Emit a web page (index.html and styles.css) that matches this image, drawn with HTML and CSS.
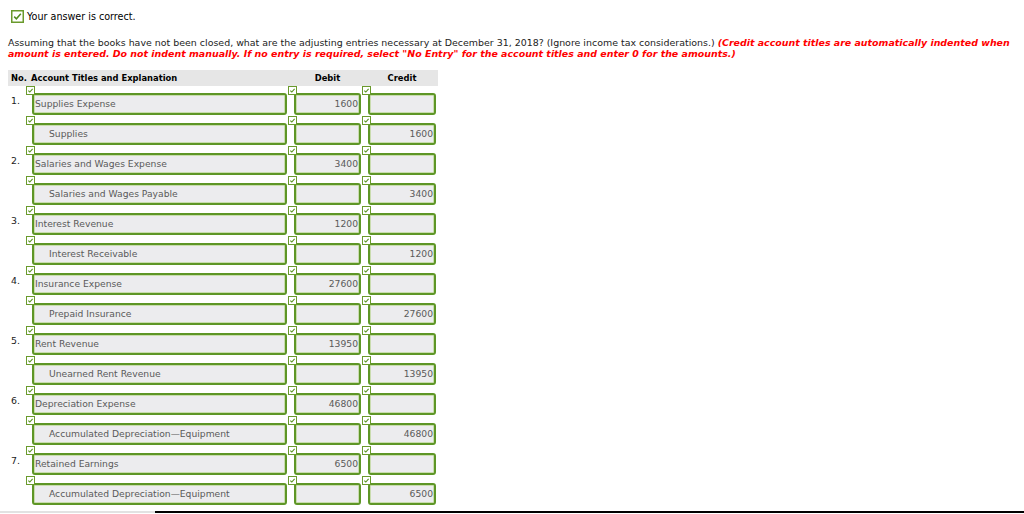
FILE: index.html
```html
<!DOCTYPE html>
<html>
<head>
<meta charset="utf-8">
<link rel="stylesheet" href="styles.css">
</head>
<body>
<div class="page">
  <div class="status">
    <svg class="big-check" width="13" height="13" viewBox="0 0 13 13"><rect x="0.75" y="0.75" width="11.5" height="11.5" fill="#fff" stroke="#6a9a2c" stroke-width="1.5"/><polyline points="3.2,6.6 5.4,8.8 9.8,3.8" fill="none" stroke="#4f8a1c" stroke-width="1.5"/></svg>
    <span>Your answer is correct.</span>
  </div>
  <p class="question">Assuming that the books have not been closed, what are the adjusting entries necessary at December 31, 2018? (Ignore income tax considerations.) <em class="note">(Credit account titles are automatically indented when amount is entered. Do not indent manually. If no entry is required, select "No Entry" for the account titles and enter 0 for the amounts.)</em></p>

  <div class="table">
    <div class="head">
      <div class="h-no">No.</div>
      <div class="h-acc">Account Titles and Explanation</div>
      <div class="h-num">Debit</div>
      <div class="h-num">Credit</div>
    </div>
    <div id="rows"></div>
  </div>
  <div class="bottom-bar"><div class="bar-grey"></div><div class="bar-black"></div></div>
</div>
<script src="app.js"></script>
</body>
</html>
```
FILE: app.js
```js
var data = [
  ["1.", "Supplies Expense", "1600", "Supplies"],
  ["2.", "Salaries and Wages Expense", "3400", "Salaries and Wages Payable"],
  ["3.", "Interest Revenue", "1200", "Interest Receivable"],
  ["4.", "Insurance Expense", "27600", "Prepaid Insurance"],
  ["5.", "Rent Revenue", "13950", "Unearned Rent Revenue"],
  ["6.", "Depreciation Expense", "46800", "Accumulated Depreciation\u2014Equipment"],
  ["7.", "Retained Earnings", "6500", "Accumulated Depreciation\u2014Equipment"]
];
var tick = '<svg class="tick" width="9" height="9" viewBox="0 0 9 9"><rect x="0.5" y="0.5" width="8" height="8" fill="#fff" stroke="#6a9a2c" stroke-width="1"/><polyline points="2.3,4.6 3.8,6 6.6,2.8" fill="none" stroke="#5a9422" stroke-width="1.1"/></svg>';
function cell(cls, text) {
  return '<div class="cell">' + tick + '<div class="box ' + cls + '">' + text + '</div></div>';
}
var html = "";
data.forEach(function (d) {
  html += '<div class="row"><div class="no">' + d[0] + '</div>' +
    cell("acc", d[1]) + cell("num", d[2]) + cell("num", "") + '</div>';
  html += '<div class="row"><div class="no"></div>' +
    cell("acc credit", d[3]) + cell("num", "") + cell("num", d[2]) + '</div>';
});
document.getElementById("rows").innerHTML = html;
```
FILE: styles.css
```css
html, body {
  margin: 0;
  padding: 0;
  background: #fff;
}
body {
  font-family: "DejaVu Sans", Verdana, sans-serif;
  font-size: 10px;
  color: #000;
  width: 1024px;
  height: 514px;
  overflow: hidden;
}
.page {
  width: 1024px;
}
.status {
  display: flex;
  align-items: center;
  gap: 3px;
  padding: 10px 0 0 11px;
  height: 13px;
  font-size: 9.6px;
}
.big-check {
  display: block;
  flex: none;
}
.question {
  margin: 14px 8px 0 8px;
  line-height: 11px;
  font-size: 9.45px;
  color: #222;
}
.note {
  color: #ff0000;
  font-weight: bold;
  font-style: italic;
}
.table {
  margin: 11px 0 0 8px;
  width: 430px;
}
.head {
  display: grid;
  grid-template-columns: 17px 255px 67px 68px;
  column-gap: 7px;
  height: 16px;
  line-height: 16px;
  background: #e6e6e6;
  font-family: "DejaVu Sans Condensed", "DejaVu Sans", sans-serif;
  font-weight: bold;
  font-size: 9.3px;
  padding-right: 2px;
}
.h-no {
  padding-left: 3px;
}
.h-acc {
  margin-left: -1px;
}
.h-num {
  text-align: center;
}
.row {
  display: grid;
  grid-template-columns: 17px 255px 67px 68px;
  column-gap: 7px;
  padding: 7px 0 1px 0;
  height: 22px;
}
.no {
  padding: 2px 0 0 3px;
  font-size: 9.4px;
  color: #222;
}
.cell {
  position: relative;
}
.tick {
  position: absolute;
  left: -6px;
  top: -7px;
  display: block;
  z-index: 2;
}
.box {
  box-sizing: border-box;
  height: 22px;
  border: 2px solid #5e9626;
  border-radius: 3px;
  background: #ececee;
  box-shadow: inset 0 0 0 1px #c9dcae;
  color: #5a5a5a;
  font-size: 9.2px;
  line-height: 18px;
  white-space: nowrap;
  overflow: hidden;
}
.acc {
  padding-left: 1px;
}
.acc.credit {
  padding-left: 15px;
}
.num {
  text-align: right;
  padding-right: 1px;
}
.bottom-bar {
  display: flex;
  margin-top: 5px;
  height: 2px;
}
.bar-grey {
  width: 155px;
  background: #e2e2e2;
}
.bar-black {
  flex: 1;
  background: #000;
}
```
